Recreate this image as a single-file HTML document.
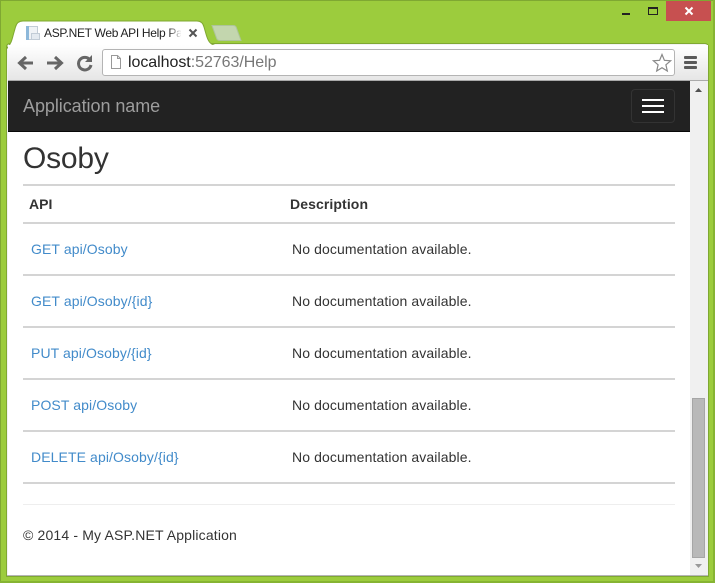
<!DOCTYPE html>
<html><head><meta charset="utf-8">
<style>
html,body{margin:0;padding:0}
body{width:715px;height:583px;overflow:hidden;position:relative;background:#9ccc3d;font-family:"Liberation Sans",sans-serif;color:#333}
.a{position:absolute;white-space:nowrap}
.line{position:absolute;left:23px;width:652px;height:2px;background:#d4d4d4}
.api{position:absolute;left:31px;font-size:14px;line-height:20px;color:#428bca;white-space:nowrap;letter-spacing:.1px}
.doc{position:absolute;left:292px;font-size:14px;line-height:20px;color:#333;white-space:nowrap;letter-spacing:.11px}
</style></head><body>
<!-- outer frame -->
<div class="a" style="left:0;top:0;width:715px;height:1px;background:#7fa832"></div>
<div class="a" style="left:0;top:0;width:1px;height:583px;background:#7fa832"></div>
<div class="a" style="left:713px;top:0;width:2px;height:583px;background:#86b433"></div>
<div class="a" style="left:0;top:581px;width:715px;height:2px;background:#86b433"></div>

<!-- window controls -->
<div class="a" style="left:666px;top:1px;width:45px;height:20px;background:#c75050"></div>
<svg class="a" style="left:684px;top:6px" width="10" height="10" viewBox="0 0 10 10"><path d="M1.500 1.500L8.500 8.500M8.500 1.500L1.500 8.500" stroke="#fff" stroke-width="2"/></svg>
<div class="a" style="left:622px;top:13px;width:8px;height:2px;background:#222"></div>
<div class="a" style="left:648px;top:7px;width:8px;height:5px;border:1px solid #222;border-top-width:2px"></div>

<!-- chrome base -->
<div class="a" style="left:7px;top:44px;width:701px;height:532px;background:#f2f2f2;border-radius:3px 3px 0 0;box-shadow:0 0 0 1px #7fa832"></div>

<!-- tabs -->
<svg class="a" style="left:0;top:0" width="260" height="50" viewBox="0 0 260 50">
<path d="M7 48C11 44 12 40 13.500 34L15.500 27C16.500 23 19 21 23 21H197C201 21 203 23 204 27L206 34C208 41 210 44 214 45V48Z" fill="#fff" stroke="#7fa832" stroke-width="1"/>
<path d="M212 25.500H233C235 25.500 236 26 236.500 28L241 40.500H220C218 40.500 217 40 216.500 38Z" fill="#c3d6ae" stroke="#adc49a" stroke-width="1"/>
</svg>
<svg class="a" style="left:25px;top:25px" width="16" height="16" viewBox="0 0 16 16">
<rect x="1.500" y="1.500" width="11" height="13" fill="#f0f3f6" stroke="#c2ccd6"/><rect x="1" y="1" width="3" height="14" fill="#8db8da"/><rect x="6.500" y="8.500" width="8" height="6" fill="#e4eaf0" stroke="#c2ccd6"/>
</svg>
<div class="a" style="left:44px;top:25px;width:137px;height:16px;overflow:hidden;font-size:12px;line-height:16px;color:#222;letter-spacing:-.3px">ASP.NET Web API Help Page</div>
<div class="a" style="left:168px;top:25px;width:14px;height:16px;background:linear-gradient(to right,rgba(255,255,255,0),#fff)"></div>
<svg class="a" style="left:188px;top:28px" width="10" height="10" viewBox="0 0 10 10"><path d="M1.500 1.500L8.500 8.500M8.500 1.500L1.500 8.500" stroke="#555" stroke-width="2"/></svg>

<!-- toolbar -->
<div class="a" style="left:8px;top:45px;width:700px;height:35px;background:linear-gradient(#fff,#e6e6e6)"></div>
<div class="a" style="left:8px;top:80px;width:700px;height:1px;background:#aaa"></div>

<svg class="a" style="left:16px;top:53px" width="84" height="20" viewBox="0 0 84 20">
<path d="M17 10H4M10 4L3.500 10L10 16" fill="none" stroke="#666" stroke-width="3"/>
<path d="M31 10H45M39 4L45.500 10L39 16" fill="none" stroke="#666" stroke-width="3"/>
<path d="M74 7A6.300 6.300 0 1 0 75 12" fill="none" stroke="#666" stroke-width="3"/><path d="M76 2V9H69Z" fill="#666"/>
</svg>

<div class="a" style="left:102px;top:49px;width:571px;height:25px;background:#fff;border:1px solid #b4b4b4;border-radius:3px"></div>
<svg class="a" style="left:110px;top:54px" width="12" height="16" viewBox="0 0 12 16"><path d="M1.500 1.500H7.500L10.500 4.500V14.500H1.500Z" fill="#fff" stroke="#999"/><path d="M7.500 1.500V4.500H10.500" fill="none" stroke="#999"/></svg>
<div class="a" style="left:128px;top:53px;font-size:16px;line-height:20px;color:#222;letter-spacing:-.05px">localhost<span style="color:#777">:52763/Help</span></div>
<svg class="a" style="left:652px;top:53px" width="20" height="20" viewBox="0 0 20 20"><path d="M10 1.500L12.400 7.300L18.600 7.800L13.900 11.800L15.300 18L10 14.700L4.700 18L6.100 11.800L1.400 7.800L7.600 7.300Z" fill="#fff" stroke="#888" stroke-width="1.200"/></svg>
<div class="a" style="left:684px;top:56px;width:13px;height:3px;background:#5a5a5a;border-radius:1px"></div>
<div class="a" style="left:684px;top:61px;width:13px;height:3px;background:#5a5a5a;border-radius:1px"></div>
<div class="a" style="left:684px;top:66px;width:13px;height:3px;background:#5a5a5a;border-radius:1px"></div>

<!-- page -->
<div class="a" style="left:8px;top:81px;width:682px;height:494px;background:#fff"></div>
<div class="a" style="left:8px;top:81px;width:682px;height:50px;background:#222"></div>
<div class="a" style="left:8px;top:131px;width:682px;height:1px;background:#080808"></div>
<div class="a" style="left:23px;top:95px;font-size:18px;line-height:22px;color:#9d9d9d;letter-spacing:-.06px">Application name</div>
<div class="a" style="left:631px;top:89px;width:42px;height:32px;border:1px solid #333;border-radius:4px"></div>
<div class="a" style="left:642px;top:99px;width:22px;height:2px;background:#fff"></div>
<div class="a" style="left:642px;top:105px;width:22px;height:2px;background:#fff"></div>
<div class="a" style="left:642px;top:111px;width:22px;height:2px;background:#fff"></div>

<div class="a" style="left:23px;top:141px;font-size:30px;line-height:36px;color:#333;letter-spacing:-.2px">Osoby</div>
<div class="line" style="top:184px"></div>
<div class="a" style="left:29px;top:194px;font-size:14px;line-height:20px;font-weight:bold">API</div>
<div class="a" style="left:290px;top:194px;font-size:14px;line-height:20px;font-weight:bold;letter-spacing:.1px">Description</div>
<div class="line" style="top:222px"></div>

<div class="api" style="top:239px">GET api/Osoby</div><div class="doc" style="top:239px">No documentation available.</div>
<div class="line" style="top:274px"></div>
<div class="api" style="top:291px">GET api/Osoby/{id}</div><div class="doc" style="top:291px">No documentation available.</div>
<div class="line" style="top:326px"></div>
<div class="api" style="top:343px">PUT api/Osoby/{id}</div><div class="doc" style="top:343px">No documentation available.</div>
<div class="line" style="top:378px"></div>
<div class="api" style="top:395px">POST api/Osoby</div><div class="doc" style="top:395px">No documentation available.</div>
<div class="line" style="top:430px"></div>
<div class="api" style="top:447px">DELETE api/Osoby/{id}</div><div class="doc" style="top:447px">No documentation available.</div>
<div class="line" style="top:482px"></div>
<div class="a" style="left:23px;top:504px;width:652px;height:1px;background:#eee"></div>
<div class="a" style="left:23px;top:525px;font-size:14px;line-height:20px;color:#333;letter-spacing:.16px">© 2014 - My ASP.NET Application</div>

<!-- scrollbar -->
<div class="a" style="left:690px;top:81px;width:18px;height:494px;background:#f0f0f0"></div>
<svg class="a" style="left:694px;top:87px" width="10" height="6"><path d="M1 5H8L4.500 1Z" fill="#505050"/></svg>
<div class="a" style="left:692px;top:398px;width:11px;height:158px;background:#b9b9b9;border:1px solid #a6a6a6"></div>
<svg class="a" style="left:694px;top:563px" width="10" height="6"><path d="M1 1H8L4.500 5Z" fill="#999"/></svg>
<div class="a" style="left:7px;top:575px;width:701px;height:1px;background:#b5b5b5"></div>
</body></html>
